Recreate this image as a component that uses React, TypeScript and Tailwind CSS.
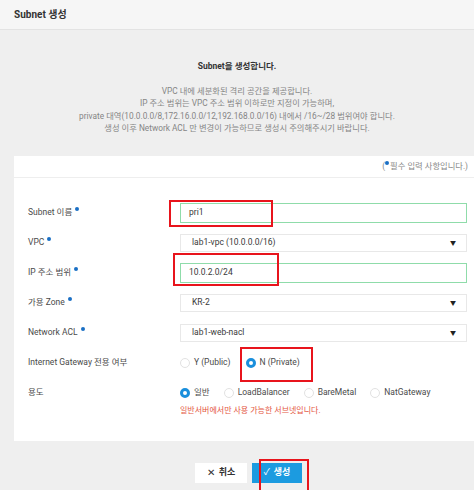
import React from "react";

const FONT = { fontFamily: 'Roboto, "Noto Sans CJK KR", sans-serif' };

function Dot() {
  return <span className="ml-[3px] inline-block h-[4px] w-[4px] -translate-y-[4px] rounded-full bg-[#1a6fc4]" />;
}

function Label({ text, required }: { text: string; required?: boolean }) {
  return (
    <div className="w-[152px] shrink-0 whitespace-nowrap text-[8.5px] text-[#4a4a4a]">
      {text}
      {required && <Dot />}
    </div>
  );
}

function TextInput({ value }: { value: string }) {
  return (
    <div className="flex h-[20px] flex-1 items-center border border-[#8fdcaa] bg-white px-[8px] text-[8.5px] text-[#3a3a3a]">
      {value}
    </div>
  );
}

function Select({ value }: { value: string }) {
  return (
    <div className="flex h-[18px] flex-1 items-center justify-between border border-[#e8e8e8] bg-white pl-[11px] pr-[10px] text-[8.5px] text-[#3a3a3a]">
      <span>{value}</span>
      <span className="text-[6px] text-[#222]">▼</span>
    </div>
  );
}

function Radio({ label, checked }: { label: string; checked?: boolean }) {
  return (
    <div className="flex items-center gap-[4px] whitespace-nowrap text-[8.5px] text-[#4a4a4a]">
      {checked ? (
        <span className="h-[10px] w-[10px] shrink-0 rounded-full border-[3px] border-[#1a8fdc] bg-white" />
      ) : (
        <span className="h-[10px] w-[10px] shrink-0 rounded-full border border-[#e2e2e2] bg-white" />
      )}
      {label}
    </div>
  );
}

function Row({ children }: { children: React.ReactNode }) {
  return <div className="flex h-[30px] items-center">{children}</div>;
}

export default function App() {
  return (
    <div className="relative h-[490px] w-[474px] overflow-hidden bg-[#efefef]" style={FONT}>
      <div className="flex h-[30px] items-center border-b border-[#e3e3e3] bg-[#f6f6f6] px-[14px] text-[10px] font-bold text-[#333]">
        Subnet 생성
      </div>

      <div className="flex flex-col items-center pt-[30px] text-[8.3px] leading-[12.5px] text-[#858585]">
        <div className="mb-[12px] text-[8.5px] font-bold text-[#333]">Subnet을 생성합니다.</div>
        <div>VPC 내에 세분화된 격리 공간을 제공합니다.</div>
        <div>IP 주소 범위는 VPC 주소 범위 이하로만 지정이 가능하며,</div>
        <div>private 대역(10.0.0.0/8,172.16.0.0/12,192.168.0.0/16) 내에서 /16~/28 범위여야 합니다.</div>
        <div>생성 이후 Network ACL 만 변경이 가능하므로 생성시 주의해주시기 바랍니다.</div>
      </div>

      <div className="ml-[14px] mt-[21px] h-[285px] w-[470px] bg-white">
        <div className="flex h-[22px] items-center justify-end border-b border-[#eeeeee] pr-[16px] text-[8.3px] text-[#888]">
          (<span className="mr-[1px] inline-block h-[4px] w-[4px] -translate-y-[3px] rounded-full bg-[#1a6fc4]" />필수 입력 사항입니다.)
        </div>
        <div className="pl-[14px] pr-[17px] pt-[20px]">
          <Row>
            <Label text="Subnet 이름" required />
            <TextInput value="pri1" />
          </Row>
          <Row>
            <Label text="VPC" required />
            <Select value="lab1-vpc (10.0.0.0/16)" />
          </Row>
          <Row>
            <Label text="IP 주소 범위" required />
            <TextInput value="10.0.2.0/24" />
          </Row>
          <Row>
            <Label text="가용 Zone" required />
            <Select value="KR-2" />
          </Row>
          <Row>
            <Label text="Network ACL" required />
            <Select value="lab1-web-nacl" />
          </Row>
          <Row>
            <Label text="Internet Gateway 전용 여부" />
            <div className="flex gap-[15px]">
              <Radio label="Y (Public)" />
              <Radio label="N (Private)" checked />
            </div>
          </Row>
          <Row>
            <Label text="용도" />
            <div className="flex gap-[14px]">
              <Radio label="일반" checked />
              <Radio label="LoadBalancer" />
              <Radio label="BareMetal" />
              <Radio label="NatGateway" />
            </div>
          </Row>
          <div className="-mt-[3px] pl-[152px] text-[8px] text-[#e4573f]">일반서버에서만 사용 가능한 서브넷입니다.</div>
        </div>
      </div>

      <div className="mt-[22px] flex gap-[5px] pl-[195px]">
        <div className="flex h-[20px] w-[52px] items-center justify-center gap-[4px] bg-white text-[9px] font-bold text-[#333]">
          <span className="text-[10px] font-normal">✕</span>취소
        </div>
        <div className="flex h-[20px] w-[50px] items-center justify-center gap-[4px] bg-[#1c9be0] text-[9px] font-bold text-white">
          <span className="text-[9px] font-normal">✓</span>생성
        </div>
      </div>

      <div className="absolute left-[169px] top-[200px] h-[27px] w-[104px] border-2 border-[#e8141c]" />
      <div className="absolute left-[173px] top-[253px] h-[33px] w-[106px] border-2 border-[#e8141c]" />
      <div className="absolute left-[240px] top-[347px] h-[35px] w-[73px] border-2 border-[#e8141c]" />
      <div className="absolute left-[259px] top-[459px] h-[40px] w-[50px] border-2 border-[#e8141c]" />
    </div>
  );
}
